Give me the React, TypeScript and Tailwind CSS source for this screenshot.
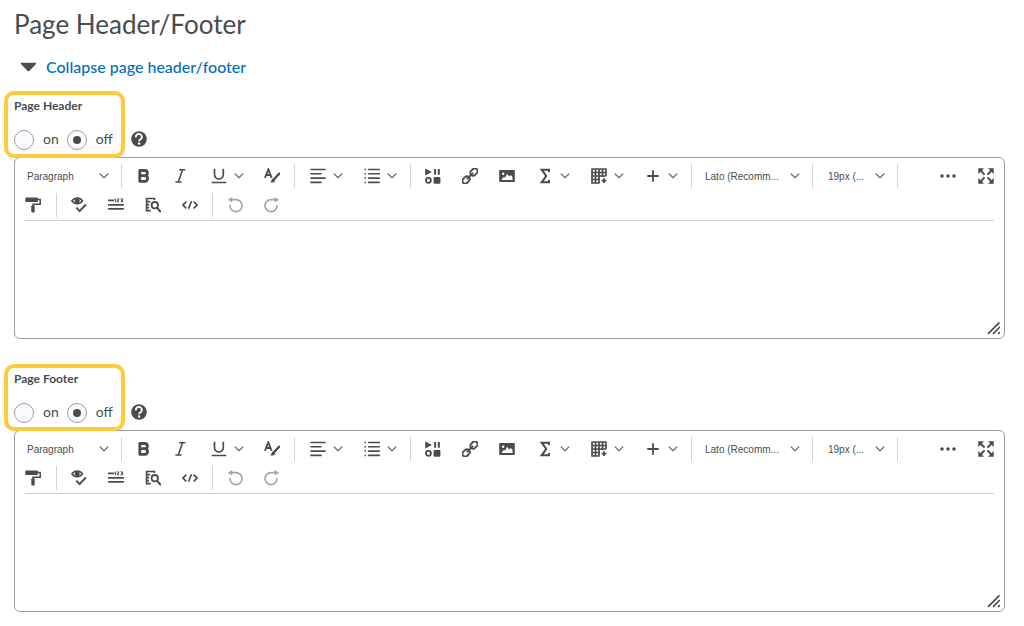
import type { ReactNode } from "react";

function Icon({ children, muted = false }: { children: ReactNode; muted?: boolean }) {
  return (
    <svg
      viewBox="0 0 16 16"
      className={muted ? "size-4 shrink-0 text-[#a4a6a8]" : "size-4 shrink-0 text-[#494c4e]"}
      fill="none"
      stroke="currentColor"
      strokeWidth="1.6"
      aria-hidden="true"
    >
      {children}
    </svg>
  );
}

function Chevron() {
  return (
    <svg viewBox="0 0 10 6" className="h-1.5 w-2.5 shrink-0" fill="none" stroke="#6e7376" strokeWidth="1.3" strokeLinecap="round" strokeLinejoin="round" aria-hidden="true">
      <path d="M1.2 1 5 4.8 8.8 1" />
    </svg>
  );
}

const icons = {
  bold: <path d="M3.8 2.500h5a2.500 2.500 0 0 1 0 5.200h-5zM3.800 7.700h5.400a2.900 2.900 0 0 1 0 5.700H3.800z" strokeWidth="2.800" strokeLinejoin="round" />,
  italic: <path d="M6.800 1.700h5M3 14h5M9.600 1.700 5.200 14" strokeWidth="1.600" strokeLinecap="round" />,
  underline: <path d="M3.500.8v5.800a4.400 4.400 0 0 0 8.800 0V.8M.7 14.500h14.600" strokeWidth="1.700" />,
  brush: (
    <>
      <path d="M.9 9.800 4.300 1.400l3.400 8.400M2.100 7h4.600" strokeWidth="1.800" />
      <path d="M15.200 5.600 10 11.300" strokeWidth="2.300" strokeLinecap="round" />
      <path d="M8.800 10.500c1.400-.3 2.600.9 2.300 2.200-.5 1.800-3.100 2.200-5 1.700 1.500-.6 1.200-2.900 2.700-3.900z" fill="currentColor" stroke="none" />
    </>
  ),
  align: <path d="M1 1.500h14M1 5.800h10M1 10.100h14M1 14.400h10" strokeLinecap="round" strokeWidth="1.600" />,
  list: (
    <>
      <path d="M4.600 1.500h10.700M4.600 5.800h10.700M4.600 10.100h10.700M4.600 14.400h10.700" strokeLinecap="round" strokeWidth="1.600" />
      <path d="M.5 1.500h1.500M.5 5.800h1.500M.5 10.100h1.500M.5 14.400h1.500" strokeWidth="1.500" />
    </>
  ),
  media: (
    <>
      <path d="M.2.600 7 4 .2 7.400z" fill="currentColor" stroke="none" />
      <path d="M10.100 1v5.800M13.800 1v5.800" strokeWidth="2" />
      <circle cx="3.400" cy="12.300" r="2.500" strokeWidth="1.800" />
      <rect x="8.600" y="9" width="6.800" height="6.700" rx="1" fill="currentColor" stroke="none" />
    </>
  ),
  link: (
    <g transform="rotate(-45 8 8)" strokeWidth="1.900">
      <rect x="-1.600" y="5.200" width="8" height="5.600" rx="2.800" />
      <rect x="9.600" y="5.200" width="8" height="5.600" rx="2.800" />
      <path d="M4.300 8h7.400" strokeLinecap="round" />
    </g>
  ),
  image: (
    <path
      fillRule="evenodd"
      fill="currentColor"
      stroke="none"
      d="M1 2h14a.8.8 0 0 1 .8.8v10.400a.8.8 0 0 1-.8.8H1a.8.8 0 0 1-.8-.8V2.800A.8.8 0 0 1 1 2zm3.200 2.600a1.200 1.200 0 1 0 0 2.400 1.200 1.200 0 0 0 0-2.400zM2.400 12h11.300l-.4-3.600-1.600-1.500-1.500 1.600-2-2.700-2.100 3.700-1.500-.5z"
    />
  ),
  sigma: <path d="M12 4V1.700H4.700L9.200 8l-4.500 6.300H12V12" strokeWidth="2" />,
  table: (
    <>
      <path d="M8.700 15H1V1h14v7.300M1 4.500h14M1 8h14M1 11.500h8M4.500 1v14M8 1v14M11.500 1v8" strokeWidth="1.700" strokeLinejoin="round" />
      <path d="M13 10.300V15M10.600 12.700h4.800" strokeWidth="1.800" />
    </>
  ),
  plus: <path d="M8 3v10M3 8h10" strokeWidth="1.800" strokeLinecap="round" />,
  more: (
    <g fill="currentColor" stroke="none">
      <circle cx="2" cy="8" r="1.800" />
      <circle cx="8" cy="8" r="1.800" />
      <circle cx="14" cy="8" r="1.800" />
    </g>
  ),
  expand: (
    <>
      <path d="M2 2l4.600 4.600M14 2 9.400 6.600M2 14l4.600-4.600M14 14 9.400 9.400" strokeWidth="2" />
      <path d="M.3.3h5.700L.3 6zM15.700.3V6L10 .3zM.3 15.700V10L6 15.700zM15.700 15.700H10l5.700-5.700z" fill="currentColor" stroke="none" />
    </>
  ),
  roller: (
    <>
      <rect x=".3" y=".6" width="12.600" height="4.400" rx=".8" fill="currentColor" stroke="none" />
      <path d="M12.500 2.500h2.700v4.700H8v3" strokeWidth="1.500" />
      <rect x="6.300" y="8.600" width="3.400" height="6.800" rx=".7" fill="currentColor" stroke="none" />
    </>
  ),
  check: (
    <>
      <path d="M.9 3.800C2.300 1.800 4.100.9 6.200.9s3.900.9 5.300 2.900c-1.400 2-3.200 2.900-5.300 2.900S2.300 5.800.9 3.800z" strokeWidth="1.500" />
      <circle cx="6.200" cy="3.800" r="2.500" fill="currentColor" stroke="none" />
      <path d="m5.400 10.600 3.200 3.500 6.300-6.600" strokeWidth="2" />
    </>
  ),
  count: (
    <>
      <path d="M.7 3.400h4.600M.7 7.800h14.600M.7 11.800h14.600" strokeWidth="1.700" strokeLinecap="round" />
      <path d="M6.600 2.300l.8-.5v3.500M9 1.900h1.700v1.500H9.300v1.500h1.700M12.500 1.900h2.100v3h-2.100M13 3.400h1.500" strokeWidth="1" />
    </>
  ),
  preview: (
    <>
      <path d="M9.400 1.500H1.600v12.200h4.200M1.600 4.600h3.600M1.600 7.600h2.500M1.600 10.600h2.500M9.400.800v2.200" strokeWidth="1.700" />
      <circle cx="9.800" cy="8.200" r="3.200" strokeWidth="1.800" />
      <path d="m12 10.700 3.200 3.800" strokeWidth="2" strokeLinecap="round" />
    </>
  ),
  code: <path d="M3.800 5.200 1 8 3.800 10.800M12.200 5.200 15 8l-2.800 2.800M9.200 5 6.800 11" strokeWidth="1.700" strokeLinecap="round" />,
  undo: (
    <>
      <path d="M3.500 2.700H9a6 6 0 1 1-6 6" strokeLinecap="round" strokeWidth="1.700" />
      <path d="M.8 2.700 5.300 0v5.400z" fill="currentColor" stroke="none" />
    </>
  ),
  redo: (
    <>
      <path d="M12.500 2.700H7a6 6 0 1 0 6 6" strokeLinecap="round" strokeWidth="1.700" />
      <path d="M15.200 2.700 10.700 0v5.400z" fill="currentColor" stroke="none" />
    </>
  ),
};

type IconName = keyof typeof icons;

function Tool({ icon, label, muted }: { icon: IconName; label: string; muted?: boolean }) {
  return (
    <button type="button" aria-label={label} disabled={muted} className="flex h-7 w-[37px] shrink-0 items-center justify-center">
      <Icon muted={muted}>{icons[icon]}</Icon>
    </button>
  );
}

function SplitTool({ icon, label }: { icon: IconName; label: string }) {
  return (
    <button type="button" aria-label={label} className="flex h-7 w-[54px] shrink-0 items-center gap-[7px] pl-3">
      <Icon>{icons[icon]}</Icon>
      <Chevron />
    </button>
  );
}

function Separator() {
  return (
    <span className="flex w-2 shrink-0 justify-center">
      <span className="h-6 w-px bg-[#cdd5dc]" />
    </span>
  );
}

function Picker({ label, value, className }: { label: string; value: string; className: string }) {
  return (
    <label className={`relative flex h-7 shrink-0 items-center ${className}`}>
      <select aria-label={label} className="w-full appearance-none bg-transparent font-['Liberation_Sans',sans-serif] text-[10px] text-[#494c4e] outline-none">
        <option>{value}</option>
      </select>
      <span className="pointer-events-none absolute inset-y-0 right-2 flex items-center">
        <Chevron />
      </span>
    </label>
  );
}

function Editor({ label }: { label: string }) {
  return (
    <div className="relative -mt-px ml-2.5 rounded-md border border-[#9a9da0] px-2.5 pt-1">
      <div className="border-b border-[#cdd5dc] pb-px" role="toolbar" aria-label={`${label} formatting`}>
        <div className="flex items-center">
          <Picker label="Format" value="Paragraph" className="w-[92px] pl-0.5" />
          <Separator />
          <Tool icon="bold" label="Bold" />
          <Tool icon="italic" label="Italic" />
          <SplitTool icon="underline" label="Underline" />
          <Tool icon="brush" label="Text color" />
          <Separator />
          <SplitTool icon="align" label="Alignment" />
          <SplitTool icon="list" label="List" />
          <Separator />
          <Tool icon="media" label="Insert stuff" />
          <Tool icon="link" label="Insert link" />
          <Tool icon="image" label="Insert image" />
          <SplitTool icon="sigma" label="Equation" />
          <SplitTool icon="table" label="Table" />
          <SplitTool icon="plus" label="Other insert options" />
          <Separator />
          <Picker label="Font" value="Lato (Recomm..." className="w-[113px] pl-2.5" />
          <Separator />
          <Picker label="Font size" value="19px (..." className="w-[77px] pl-3" />
          <Separator />
          <div className="ml-auto flex gap-[22px]">
            <button type="button" aria-label="More actions">
              <Icon>{icons.more}</Icon>
            </button>
            <button type="button" aria-label="Full screen">
              <Icon>{icons.expand}</Icon>
            </button>
          </div>
        </div>
        <div className="mt-px flex items-center">
          <button type="button" aria-label="Format painter" className="flex h-7 w-[27px] shrink-0 items-center">
            <Icon>{icons.roller}</Icon>
          </button>
          <Separator />
          <Tool icon="check" label="Accessibility check" />
          <Tool icon="count" label="Word count" />
          <Tool icon="preview" label="Preview" />
          <Tool icon="code" label="Source code" />
          <Separator />
          <Tool icon="undo" label="Undo" muted />
          <Tool icon="redo" label="Redo" muted />
        </div>
      </div>
      <textarea aria-label={label} className="block h-[117px] w-full resize-none bg-transparent py-2 text-base outline-none" />
      <svg viewBox="0 0 14 14" className="pointer-events-none absolute right-[3px] bottom-[3px] size-3.5" stroke="#494c4e" strokeWidth="1.700" strokeLinecap="round" aria-hidden="true">
        <path d="M1.500 12.300 12 1.800M6.500 12.300 12.300 6.500M11.600 12.300l.7-.7" />
      </svg>
    </div>
  );
}

function Choice({ name, value, defaultChecked }: { name: string; value: string; defaultChecked?: boolean }) {
  return (
    <label className="flex items-center gap-[9px]">
      <input
        type="radio"
        name={name}
        value={value}
        defaultChecked={defaultChecked}
        className="grid size-5 shrink-0 appearance-none place-content-center rounded-full border border-[#9a9ea3] bg-[#f9fbff] before:size-2 before:rounded-full checked:before:bg-[#494c4e]"
      />
      <span className="pb-0.5 text-sm/4">{value}</span>
    </label>
  );
}

function Section({ id, title }: { id: string; title: string }) {
  return (
    <section>
      <div className="flex items-end gap-1.5">
        <div role="radiogroup" aria-labelledby={id} className="relative z-10 w-[121px] rounded-[10px] border-4 border-[#ffcb3d] px-1.5 pt-[3px] pb-1">
          <h2 id={id} className="text-xs/4 font-bold">
            {title}
          </h2>
          <div className="mt-4 flex gap-2">
            <Choice name={id} value="on" />
            <Choice name={id} value="off" defaultChecked />
          </div>
        </div>
        <button type="button" aria-label={`${title} help`} className="mb-[11px]">
          <svg viewBox="0 0 16 16" className="size-4" aria-hidden="true">
            <circle cx="8" cy="8" r="7.800" fill="#494c4e" />
            <path d="M4.900 6.300A3 3 0 1 1 9.800 8.200C8.700 8.800 8.200 9.200 8.200 10.200" fill="none" stroke="#fff" strokeWidth="1.900" />
            <circle cx="8.100" cy="12.500" r="1.200" fill="#fff" />
          </svg>
        </button>
      </div>
      <Editor label={title} />
    </section>
  );
}

export default function App() {
  return (
    <main className="min-h-screen bg-white pr-[19px] pb-3 pl-1 font-[Lato,sans-serif] text-[#494c4e]">
      <h1 className="pt-2 pl-2.5 text-[26px]/8">Page Header/Footer</h1>
      <a href="#page-header" className="mt-[15px] ml-4 flex w-fit items-center gap-[9px] text-base/6 font-medium text-[#006fbf]">
        <svg viewBox="0 0 17 10" className="h-2.5 w-[17px]" fill="#494c4e" aria-hidden="true">
          <path d="M1.500.8h14c.8 0 1 .7.500 1.200L9.300 8.900c-.5.500-1.100.500-1.600 0L1 2C.500 1.500.7.800 1.500.8z" />
        </svg>
        Collapse page header/footer
      </a>
      <div className="mt-3 flex flex-col gap-[25px]">
        <Section id="page-header" title="Page Header" />
        <Section id="page-footer" title="Page Footer" />
      </div>
    </main>
  );
}
